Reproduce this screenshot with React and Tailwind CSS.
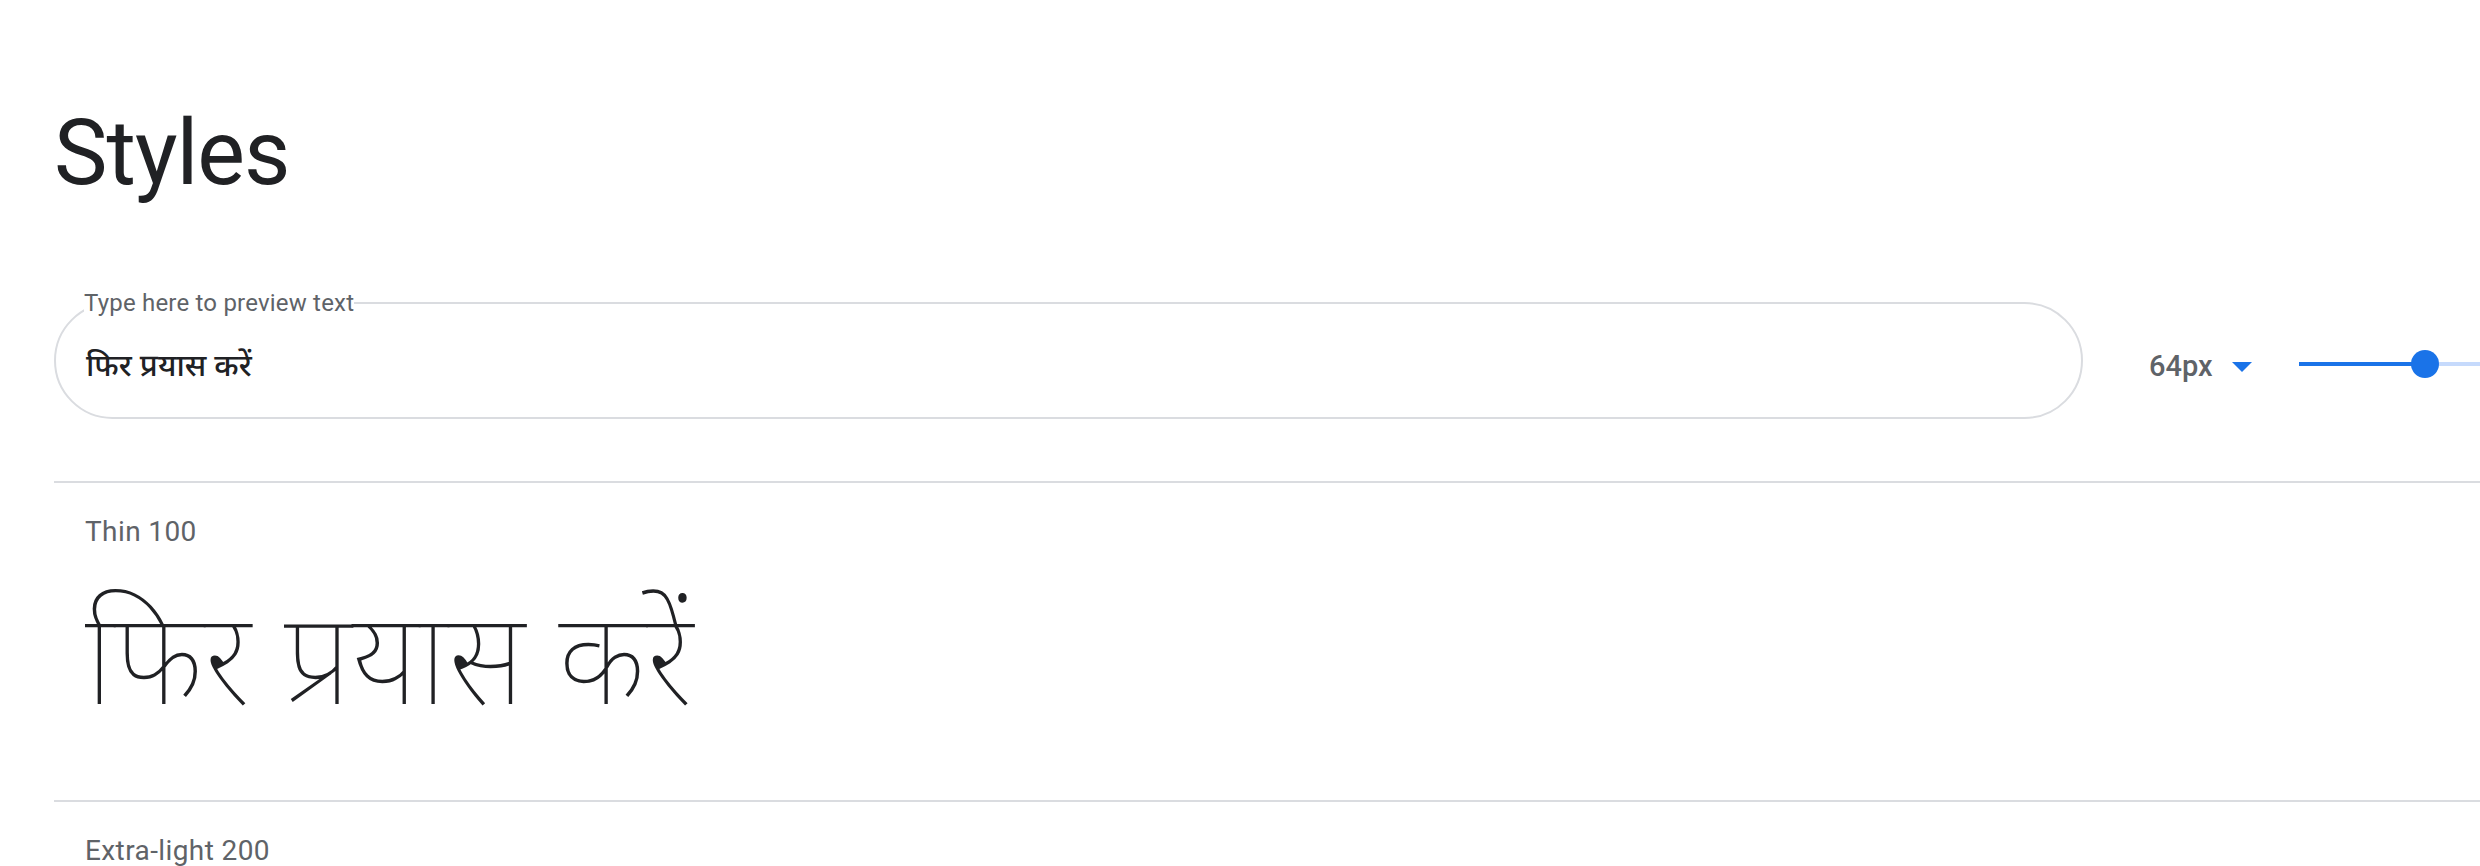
import React from 'react';

const sample = 'फिर प्रयास करें';

const styles = [
  { name: 'Thin 100', weight: 'font-thin' },
  { name: 'Extra-light 200', weight: 'font-extralight' },
];

const App = () => {
  return (
    <div className="w-[2480px] h-[866px] overflow-hidden bg-white font-['Roboto','Noto_Sans',sans-serif]">
      <div className="w-[3000px] pl-[54px]">
        {/* Heading */}
        <h2 className="pt-[98px] text-[90px] leading-[112px] text-[#202124] font-normal tracking-[-1px]">Styles</h2>

        {/* Preview controls */}
        <div className="mt-[93px] flex items-center">
          <fieldset className="w-[2029px] h-[128px] shrink-0 rounded-full border-2 border-[#dadce0] px-[30px] -mt-[12px]">
            <legend className="text-[24px] leading-[24px] text-[#5f6368] px-0 -ml-[2px] tracking-[0.2px]">Type here to preview text</legend>
            <div className="h-[97px] pt-[12px] flex items-center text-[31px] font-medium text-[#202124] font-['Noto_Sans_Devanagari','Noto_Sans',sans-serif]">
              {sample}
            </div>
          </fieldset>

          <button className="ml-[66px] mt-[11px] flex items-center text-[29px] font-medium text-[#5f6368]">
            64px
            <span className="ml-[19px] w-0 h-0 border-l-[10px] border-r-[10px] border-t-[10px] border-l-transparent border-r-transparent border-t-[#1a73e8]"></span>
          </button>

          <div className="ml-[47px] mt-[6px] w-[600px] flex items-center">
            <div className="w-[126px] h-[4px] bg-[#1a73e8]"></div>
            <div className="w-[28px] h-[28px] -mx-[14px] rounded-full bg-[#1a73e8] relative"></div>
            <div className="flex-1 h-[4px] bg-[#c6dafc]"></div>
          </div>
        </div>

        {/* Style rows */}
        <div className="mt-[62px]">
          {styles.map((s) => (
            <div key={s.name} className="border-t-2 border-[#dadce0] pl-[31px] h-[319px]">
              <div className="pt-[33px] text-[28px] leading-[32px] text-[#5f6368] tracking-[0.4px]">{s.name}</div>
              <div className={`mt-[45px] text-[128px] leading-[160px] text-[#202124] font-['Noto_Sans_Devanagari','Noto_Sans',sans-serif] ${s.weight}`}>
                {sample}
              </div>
            </div>
          ))}
        </div>
      </div>
    </div>
  );
};

export default App;
